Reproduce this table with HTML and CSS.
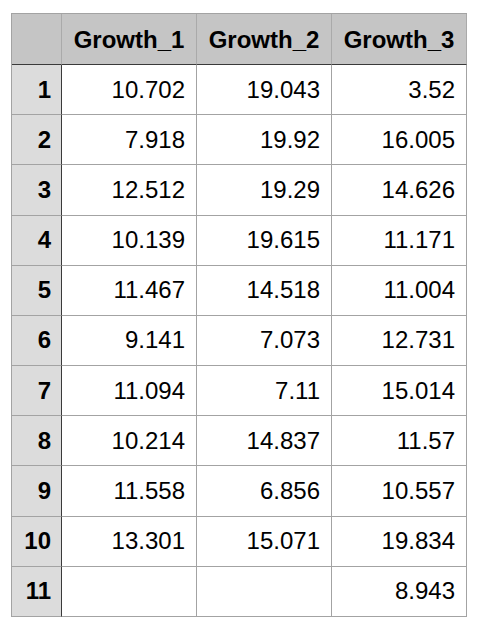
FILE: index.html
```html
<!DOCTYPE html>
<html>
<head>
<meta charset="utf-8">
<link rel="stylesheet" href="styles.css">
</head>
<body>
<div class="sheet">
  <div class="hc corner"></div><div class="hc">Growth_1</div><div class="hc">Growth_2</div><div class="hc">Growth_3</div>
  <div class="rh">1</div><div class="c">10.702</div><div class="c">19.043</div><div class="c">3.52</div>
  <div class="rh">2</div><div class="c">7.918</div><div class="c">19.92</div><div class="c">16.005</div>
  <div class="rh">3</div><div class="c">12.512</div><div class="c">19.29</div><div class="c">14.626</div>
  <div class="rh">4</div><div class="c">10.139</div><div class="c">19.615</div><div class="c">11.171</div>
  <div class="rh">5</div><div class="c">11.467</div><div class="c">14.518</div><div class="c">11.004</div>
  <div class="rh">6</div><div class="c">9.141</div><div class="c">7.073</div><div class="c">12.731</div>
  <div class="rh">7</div><div class="c">11.094</div><div class="c">7.11</div><div class="c">15.014</div>
  <div class="rh">8</div><div class="c">10.214</div><div class="c">14.837</div><div class="c">11.57</div>
  <div class="rh">9</div><div class="c">11.558</div><div class="c">6.856</div><div class="c">10.557</div>
  <div class="rh">10</div><div class="c">13.301</div><div class="c">15.071</div><div class="c">19.834</div>
  <div class="rh">11</div><div class="c"></div><div class="c"></div><div class="c">8.943</div>
</div>
</body>
</html>
```
FILE: styles.css
```css
* { box-sizing: border-box; }
html, body { margin: 0; background: #fff; }
body { padding: 13px 0 0 11px; }
.sheet {
  display: grid;
  grid-template-columns: 50px 135px 135px 135px;
  grid-template-rows: 51px repeat(11, 1fr);
  width: 456px;
  height: 604px;
  border-left: 1px solid #a3a3a3;
  border-top: 1px solid #a3a3a3;
  font-family: "Liberation Sans", Arial, sans-serif;
  font-size: 24px;
  color: #000;
}
.hc, .rh, .c {
  display: flex;
  align-items: center;
  border-right: 1px solid #a3a3a3;
  border-bottom: 1px solid #a3a3a3;
}
.hc {
  background: #c5c5c5;
  font-weight: bold;
  justify-content: center;
  border-bottom: 1px solid #3a3a3a;
  border-right-color: #aaaaaa;
  padding-top: 1px;
}
.rh {
  background: #dcdcdc;
  font-weight: bold;
  justify-content: flex-end;
  padding-right: 10px;
  border-right: 1px solid #3a3a3a;
}
.c {
  justify-content: flex-end;
  padding-right: 11px;
}
```
